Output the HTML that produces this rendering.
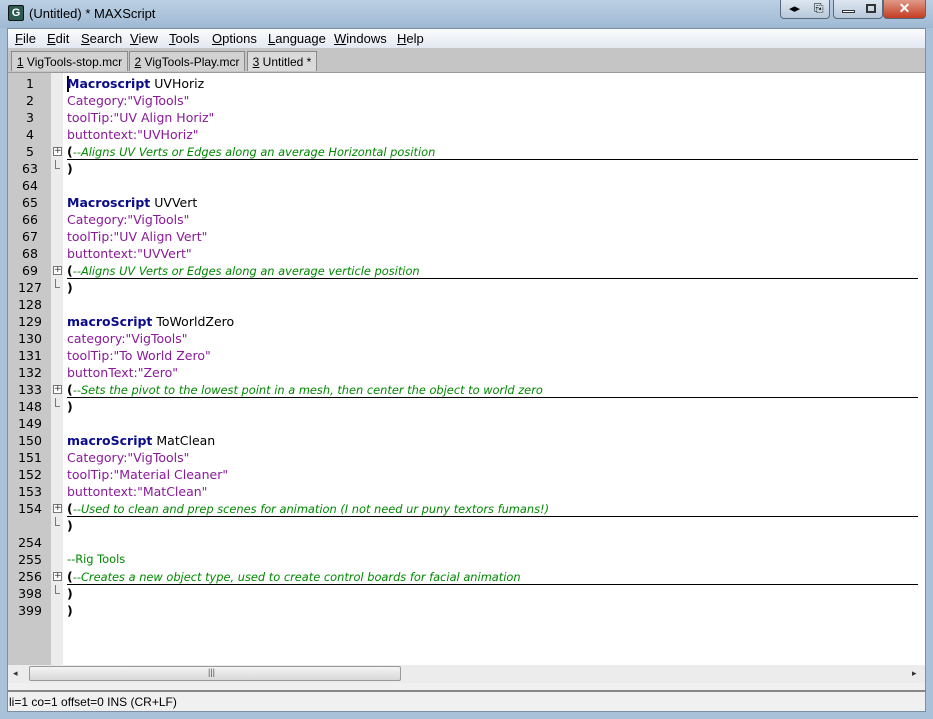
<!DOCTYPE html>
<html><head><style>
*{margin:0;padding:0;box-sizing:border-box}
body{width:933px;height:719px;overflow:hidden;background:#a9c1d9;font-family:"Liberation Sans",sans-serif;position:relative}
.title{position:absolute;left:0;top:0;width:933px;height:28px;background:linear-gradient(#bcd0e4,#9fb9d3)}
.title .t{position:absolute;left:29px;top:6px;font-size:13px;color:#000}
.ico{position:absolute;left:8px;top:5px;width:16px;height:16px;background:#2c5a50;border:1px solid #111;border-radius:2px;color:#fff;font-size:11px;text-align:center;line-height:14px;font-weight:bold}
.btns{position:absolute;top:0;height:19px;border:1px solid #55697f;border-top:none;border-radius:0 0 4px 4px;background:linear-gradient(#dde7f1,#b7c8da)}
.frame{position:absolute;left:7px;top:28px;width:919px;height:684px;background:#f0f0f0;border:1px solid #7a8ea4}
.menu{position:absolute;left:8px;top:29px;width:917px;height:19px;background:linear-gradient(#fbfcfd,#e3e8f1);font-size:13px}
.menu span{position:absolute;top:2px}
.tabs{position:absolute;left:8px;top:48px;width:917px;height:25px;background:#c5c5c5;border-bottom:1px solid #999}
.tab{position:absolute;top:3px;height:20px;background:#d2d2d2;border:1px solid #8a8a8a;border-bottom:none;font-size:12px;padding:3px 0 0 0;text-align:center}
.ed{position:absolute;left:8px;top:73px;width:917px;height:592px;background:#fff}
.gut{position:absolute;left:8px;top:73px;width:43px;height:592px;background:#c8c8c8}
.fold{position:absolute;left:51px;top:73px;width:12px;height:592px;background:#ececec}
.row{position:absolute;left:0;height:17px;width:933px;font-family:"DejaVu Sans",sans-serif;font-size:12.5px;line-height:17px}
.n{position:absolute;left:10px;width:40px;text-align:center;font-size:12.5px;color:#000}
.c{position:absolute;left:67px;white-space:pre}
.k{color:#0a0a8c;font-weight:bold}
.p{color:#8a1a9a}
.g{color:#008800;font-style:italic;font-family:"DejaVu Sans",sans-serif;font-size:11.4px}
.b{font-weight:bold}
.ul{position:absolute;left:67px;width:851px;top:16px;height:1px;background:#000}
.bx{position:absolute;left:53px;top:4px;width:9px;height:9px;border:1px solid #777;font-size:9px;line-height:7px;text-align:center;color:#333;background:#fff}
.lc{position:absolute;left:55px;top:0px;width:5px;height:9px;border-left:1px solid #777;border-bottom:1px solid #777}
.sb{position:absolute;left:8px;top:665px;width:917px;height:18px;background:#ececec}
.thumb{position:absolute;left:29px;top:666px;width:372px;height:15px;border:1px solid #999;border-radius:2px;background:linear-gradient(#f4f4f4,#d8d8d8)}
.status{position:absolute;left:8px;top:690px;width:917px;height:21px;background:#f0f0f0;border-top:2px solid #888;font-size:12px;padding:3px 0 0 1px}
</style></head><body>
<div class="title"><div class="ico">G</div><div class="t">(Untitled) * MAXScript</div>
<div class="btns" style="left:780px;width:50px"><span style="position:absolute;left:8px;top:2px;font-size:11px">◂▸</span><span style="position:absolute;left:33px;top:1px;font-size:12px">⎘</span></div>
<div class="btns" style="left:833px;width:50px"><div style="position:absolute;left:8px;top:10px;width:13px;height:3px;border:1px solid #333;background:#fff"></div><div style="position:absolute;left:32px;top:4px;width:10px;height:9px;border:2px solid #333"></div></div>
<div class="btns" style="left:883px;width:43px;background:linear-gradient(#e09a88,#c43c22);color:#fff;text-align:center;font-weight:bold;font-size:14px;line-height:17px">✕</div>
</div>
<div class="frame"></div>
<div class="menu">
<span style="left:7px"><u>F</u>ile</span><span style="left:39px"><u>E</u>dit</span><span style="left:73px"><u>S</u>earch</span><span style="left:122px"><u>V</u>iew</span><span style="left:161px"><u>T</u>ools</span><span style="left:204px"><u>O</u>ptions</span><span style="left:260px"><u>L</u>anguage</span><span style="left:326px"><u>W</u>indows</span><span style="left:389px"><u>H</u>elp</span>
</div>
<div class="tabs">
<div class="tab" style="left:3px;width:117px"><u>1</u> VigTools-stop.mcr</div>
<div class="tab" style="left:121px;width:116px"><u>2</u> VigTools-Play.mcr</div>
<div class="tab" style="left:239px;width:70px;background:#dadada"><u>3</u> Untitled *</div>
</div>
<div class="ed"></div><div class="gut"></div><div class="fold"></div>
<div style="position:absolute;left:67px;top:76px;width:2px;height:16px;background:#000"></div>
<div class="row" style="top:75px"><span class="n">1</span><span class="c"><span class="k">Macroscript</span> UVHoriz</span></div>
<div class="row" style="top:92px"><span class="n">2</span><span class="c p">Category:"VigTools"</span></div>
<div class="row" style="top:109px"><span class="n">3</span><span class="c p">toolTip:"UV Align Horiz"</span></div>
<div class="row" style="top:126px"><span class="n">4</span><span class="c p">buttontext:"UVHoriz"</span></div>
<div class="row" style="top:143px"><span class="n">5</span><span class="bx">+</span><span class="c"><span class="b">(</span><span class="g">--Aligns UV Verts or Edges along an average Horizontal position</span></span><span class="ul"></span></div>
<div class="row" style="top:160px"><span class="n">63</span><span class="lc"></span><span class="c b">)</span></div>
<div class="row" style="top:177px"><span class="n">64</span></div>
<div class="row" style="top:194px"><span class="n">65</span><span class="c"><span class="k">Macroscript</span> UVVert</span></div>
<div class="row" style="top:211px"><span class="n">66</span><span class="c p">Category:"VigTools"</span></div>
<div class="row" style="top:228px"><span class="n">67</span><span class="c p">toolTip:"UV Align Vert"</span></div>
<div class="row" style="top:245px"><span class="n">68</span><span class="c p">buttontext:"UVVert"</span></div>
<div class="row" style="top:262px"><span class="n">69</span><span class="bx">+</span><span class="c"><span class="b">(</span><span class="g">--Aligns UV Verts or Edges along an average verticle position</span></span><span class="ul"></span></div>
<div class="row" style="top:279px"><span class="n">127</span><span class="lc"></span><span class="c b">)</span></div>
<div class="row" style="top:296px"><span class="n">128</span></div>
<div class="row" style="top:313px"><span class="n">129</span><span class="c"><span class="k">macroScript</span> ToWorldZero</span></div>
<div class="row" style="top:330px"><span class="n">130</span><span class="c p">category:"VigTools"</span></div>
<div class="row" style="top:347px"><span class="n">131</span><span class="c p">toolTip:"To World Zero"</span></div>
<div class="row" style="top:364px"><span class="n">132</span><span class="c p">buttonText:"Zero"</span></div>
<div class="row" style="top:381px"><span class="n">133</span><span class="bx">+</span><span class="c"><span class="b">(</span><span class="g">--Sets the pivot to the lowest point in a mesh, then center the object to world zero</span></span><span class="ul"></span></div>
<div class="row" style="top:398px"><span class="n">148</span><span class="lc"></span><span class="c b">)</span></div>
<div class="row" style="top:415px"><span class="n">149</span></div>
<div class="row" style="top:432px"><span class="n">150</span><span class="c"><span class="k">macroScript</span> MatClean</span></div>
<div class="row" style="top:449px"><span class="n">151</span><span class="c p">Category:"VigTools"</span></div>
<div class="row" style="top:466px"><span class="n">152</span><span class="c p">toolTip:"Material Cleaner"</span></div>
<div class="row" style="top:483px"><span class="n">153</span><span class="c p">buttontext:"MatClean"</span></div>
<div class="row" style="top:500px"><span class="n">154</span><span class="bx">+</span><span class="c"><span class="b">(</span><span class="g">--Used to clean and prep scenes for animation (I not need ur puny textors fumans!)</span></span><span class="ul"></span></div>
<div class="row" style="top:517px"><span class="lc"></span><span class="c b">)</span></div>
<div class="row" style="top:534px"><span class="n">254</span></div>
<div class="row" style="top:551px"><span class="n">255</span><span class="c g" style="font-style:normal">--Rig Tools</span></div>
<div class="row" style="top:568px"><span class="n">256</span><span class="bx">+</span><span class="c"><span class="b">(</span><span class="g">--Creates a new object type, used to create control boards for facial animation</span></span><span class="ul"></span></div>
<div class="row" style="top:585px"><span class="n">398</span><span class="lc"></span><span class="c b">)</span></div>
<div class="row" style="top:602px"><span class="n">399</span><span class="c b">)</span></div>
<div class="sb"></div>
<div style="position:absolute;left:13px;top:668px;font-size:9px;color:#333">◂</div>
<div style="position:absolute;left:912px;top:668px;font-size:9px;color:#333">▸</div>
<div class="thumb"><span style="position:absolute;left:178px;top:0px;font-size:9px;color:#555">|||</span></div>
<div class="status">li=1 co=1 offset=0 INS (CR+LF)</div>
</body></html>
